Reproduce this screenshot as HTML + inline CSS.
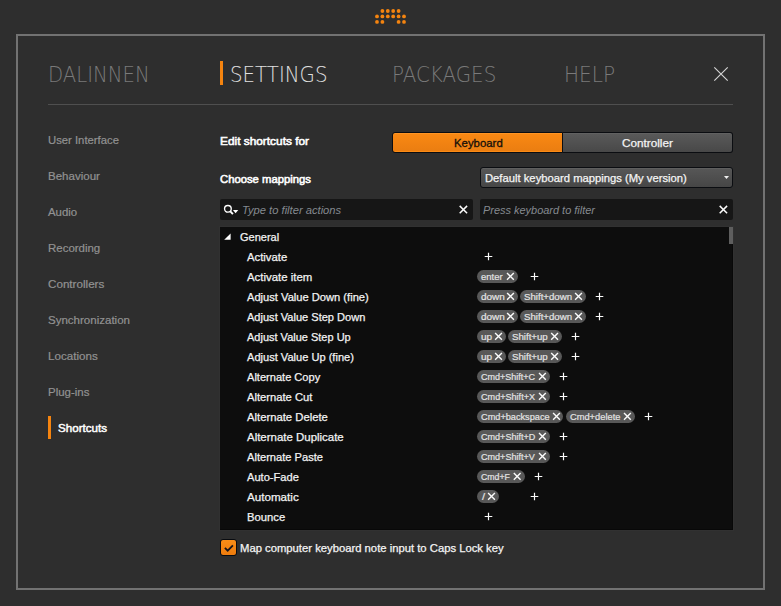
<!DOCTYPE html>
<html lang="en"><head><meta charset="utf-8"><title>Settings - Shortcuts</title>
<style>
html,body{margin:0;padding:0}
body{width:781px;height:606px;background:#2e2e2e;position:relative;overflow:hidden;font-family:"Liberation Sans",sans-serif}
.abs,.t{position:absolute}
.t{white-space:nowrap;transform-origin:0 50%;display:block}
.dialog{left:16px;top:34px;width:745px;height:552px;border:2px solid #727272}
.sep{left:48px;top:104px;width:685px;height:1px;background:#4f4f4f}
.bar{background:#f5840f}
.seg{top:132px;height:19px;border:1px solid #0b0d11;box-sizing:content-box}
.seg.on{left:392px;width:169px;border-radius:3px 0 0 3px;background:linear-gradient(#fa8913,#ea7d11);box-shadow:inset 0 1px 0 #ff9524,inset 0 -1px 0 #fb8a14}
.seg.off{left:562px;width:170px;border-radius:0 3px 3px 0;border-left:none;background:linear-gradient(#5a5a5a,#484848);left:563px;width:169px;box-shadow:inset 0 1px 0 #616161}
.drop{left:480px;top:167px;width:251px;height:19px;border:1px solid #0b0d11;border-radius:3px;background:linear-gradient(#575757,#464646);box-shadow:inset 0 1px 0 #5f5f5f}
.inp{top:199px;height:21px;background:#161616;border-radius:2px}
.list{left:220px;top:227px;width:513px;height:303px;background:#0d0d0d;box-shadow:inset -1px -1px 0 #080808,0 0 0 1px #313131}
.sb{left:729px;top:227px;width:4px;height:17px;background:#5e5e5e}
.chip{}
.pill{position:absolute;height:13px;border-radius:6.5px;background:#585858}
svg{position:absolute;overflow:visible}
.cb{left:220px;top:539px;width:15px;height:15px;border:1px solid #080b10;border-radius:3px;background:linear-gradient(#f98d17,#ee7c0d)}

</style></head><body>
<svg class="logo" style="left:0;top:0" width="781" height="34" viewBox="0 0 781 34" fill="#f5840f"><circle cx="382.4" cy="11.0" r="1.9"/><circle cx="387.8" cy="11.0" r="1.9"/><circle cx="393.2" cy="11.0" r="1.9"/><circle cx="398.6" cy="11.0" r="1.9"/><circle cx="377.0" cy="16.4" r="1.9"/><circle cx="382.4" cy="16.4" r="1.9"/><circle cx="387.8" cy="16.4" r="1.9"/><circle cx="393.2" cy="16.4" r="1.9"/><circle cx="398.6" cy="16.4" r="1.9"/><circle cx="404.0" cy="16.4" r="1.9"/><circle cx="377.0" cy="21.9" r="1.9"/><circle cx="382.4" cy="21.9" r="1.9"/><circle cx="398.6" cy="21.9" r="1.9"/><circle cx="404.0" cy="21.9" r="1.9"/></svg>
<div class="abs dialog"></div>
<nav class="tabs">
<div class="abs bar" style="left:220px;top:61px;width:3px;height:24px"></div>
<span class="t tab" style="left:48.06px;top:61.00px;font-size:22px;line-height:28px;color:#7a7a7a;transform:scaleX(0.8956);font-weight:200;font-family:'DejaVu Sans Light', 'DejaVu Sans', 'Liberation Sans', sans-serif">DALINNEN</span>
<span class="t tab" style="left:230.00px;top:61.00px;font-size:22px;line-height:28px;color:#e0e0e0;transform:scaleX(0.9005);font-weight:200;font-family:'DejaVu Sans Light', 'DejaVu Sans', 'Liberation Sans', sans-serif">SETTINGS</span>
<span class="t tab" style="left:391.84px;top:61.00px;font-size:22px;line-height:28px;color:#7a7a7a;transform:scaleX(0.9025);font-weight:200;font-family:'DejaVu Sans Light', 'DejaVu Sans', 'Liberation Sans', sans-serif">PACKAGES</span>
<span class="t tab" style="left:563.82px;top:61.00px;font-size:22px;line-height:28px;color:#7a7a7a;transform:scaleX(0.9129);font-weight:200;font-family:'DejaVu Sans Light', 'DejaVu Sans', 'Liberation Sans', sans-serif">HELP</span>
<svg style="left:714px;top:67px" width="14" height="14" viewBox="0 0 14 14"><path d="M0.3 0.3L13.7 13.7M13.7 0.3L0.3 13.7" stroke="#d4d4d4" stroke-width="1.15" fill="none"/></svg>
</nav>
<div class="abs sep"></div>
<aside class="side">
<span class="t nav" style="left:47.53px;top:132.00px;font-size:11px;line-height:17px;color:#929292;transform:scaleX(1.0265);-webkit-text-stroke:0.2px #929292">User Interface</span>
<span class="t nav" style="left:47.51px;top:168.00px;font-size:11px;line-height:17px;color:#929292;transform:scaleX(1.0482);-webkit-text-stroke:0.2px #929292">Behaviour</span>
<span class="t nav" style="left:47.90px;top:204.00px;font-size:11px;line-height:17px;color:#929292;transform:scaleX(1.0342);-webkit-text-stroke:0.2px #929292">Audio</span>
<span class="t nav" style="left:47.52px;top:240.00px;font-size:11px;line-height:17px;color:#929292;transform:scaleX(1.0421);-webkit-text-stroke:0.2px #929292">Recording</span>
<span class="t nav" style="left:47.87px;top:276.00px;font-size:11px;line-height:17px;color:#929292;transform:scaleX(1.0590);-webkit-text-stroke:0.2px #929292">Controllers</span>
<span class="t nav" style="left:48.14px;top:312.00px;font-size:11px;line-height:17px;color:#929292;transform:scaleX(1.0477);-webkit-text-stroke:0.2px #929292">Synchronization</span>
<span class="t nav" style="left:47.61px;top:348.00px;font-size:11px;line-height:17px;color:#929292;transform:scaleX(1.0551);-webkit-text-stroke:0.2px #929292">Locations</span>
<span class="t nav" style="left:47.62px;top:384.00px;font-size:11px;line-height:17px;color:#929292;transform:scaleX(1.0426);-webkit-text-stroke:0.2px #929292">Plug-ins</span>
<span class="t nav" style="left:57.94px;top:420.00px;font-size:11px;line-height:17px;color:#ffffff;transform:scaleX(1.0543);-webkit-text-stroke:0.45px #ffffff">Shortcuts</span>
<div class="abs bar" style="left:48px;top:416px;width:3px;height:23px"></div>
</aside>
<main>
<div class="abs seg on"></div><div class="abs seg off"></div>
<div class="abs drop"></div>
<svg style="left:724px;top:176px" width="5" height="3" viewBox="0 0 5 3"><path d="M0 0H5L2.5 3Z" fill="#f0f0f0"/></svg>
<div class="abs inp" style="left:220px;width:253px"></div>
<div class="abs inp" style="left:480px;width:253px"></div>
<svg style="left:223px;top:204px" width="16" height="12" viewBox="0 0 16 12"><circle cx="4.9" cy="4.8" r="3.35" stroke="#ffffff" stroke-width="1.35" fill="none"/><path d="M7.3 7.3L9.9 10.1" stroke="#ffffff" stroke-width="1.9" stroke-linecap="butt"/><path d="M9.9 6H15.3L12.6 9.3Z" fill="#ffffff"/></svg>
<svg style="left:459px;top:205px" width="10" height="10" viewBox="0 0 10 10"><g transform="translate(0.20 0.40)"><path d="M0.5 0.5L7.9 7.9M7.9 0.5L0.5 7.9" stroke="#fafafa" stroke-width="1.5" fill="none"/></g></svg>
<svg style="left:719px;top:205px" width="10" height="10" viewBox="0 0 10 10"><g transform="translate(0.20 0.40)"><path d="M0.5 0.5L7.9 7.9M7.9 0.5L0.5 7.9" stroke="#fafafa" stroke-width="1.5" fill="none"/></g></svg>
<span class="t lbl" style="left:219.96px;top:133.00px;font-size:11px;line-height:17px;color:#ffffff;transform:scaleX(1.0784);-webkit-text-stroke:0.55px #ffffff">Edit shortcuts for</span>
<span class="t lbl" style="left:220.24px;top:171.00px;font-size:11px;line-height:17px;color:#ffffff;transform:scaleX(1.0260);-webkit-text-stroke:0.55px #ffffff">Choose mappings</span>
<span class="t btn" style="left:453.82px;top:135.00px;font-size:11px;line-height:17px;color:#15100a;transform:scaleX(1.0348);-webkit-text-stroke:0.3px #15100a">Keyboard</span>
<span class="t btn" style="left:621.93px;top:135.00px;font-size:11px;line-height:17px;color:#f4f4f4;transform:scaleX(1.0674);-webkit-text-stroke:0.25px #f4f4f4">Controller</span>
<span class="t btn" style="left:484.83px;top:170.00px;font-size:11px;line-height:17px;color:#f4f4f4;transform:scaleX(1.0222);-webkit-text-stroke:0.25px #f4f4f4">Default keyboard mappings (My version)</span>
<span class="t ph" style="left:242.38px;top:202.00px;font-size:11px;line-height:17px;color:#858a90;transform:scaleX(1.0155);font-style:italic">Type to filter actions</span>
<span class="t ph" style="left:483.15px;top:202.00px;font-size:11px;line-height:17px;color:#858a90;transform:scaleX(0.9951);font-style:italic">Press keyboard to filter</span>
<section class="abs list"></section>
<div class="abs sb"></div>
<svg style="left:224px;top:233px" width="7" height="7" viewBox="0 0 7 7"><path d="M6.6 0.4V6.8H0.2Z" fill="#ffffff"/></svg>
<span class="t row" style="left:240.05px;top:229.00px;font-size:11px;line-height:17px;color:#f2f2f2;transform:scaleX(1.0000);-webkit-text-stroke:0.25px #f2f2f2">General</span>
<span class="t row" style="left:247.46px;top:249.00px;font-size:11px;line-height:17px;color:#f2f2f2;transform:scaleX(1.0282);-webkit-text-stroke:0.25px #f2f2f2">Activate</span>
<span class="t row" style="left:247.46px;top:269.00px;font-size:11px;line-height:17px;color:#f2f2f2;transform:scaleX(1.0359);-webkit-text-stroke:0.25px #f2f2f2">Activate item</span>
<span class="t row" style="left:247.45px;top:289.00px;font-size:11px;line-height:17px;color:#f2f2f2;transform:scaleX(1.0125);-webkit-text-stroke:0.25px #f2f2f2">Adjust Value Down (fine)</span>
<span class="t row" style="left:247.45px;top:309.00px;font-size:11px;line-height:17px;color:#f2f2f2;transform:scaleX(1.0043);-webkit-text-stroke:0.25px #f2f2f2">Adjust Value Step Down</span>
<span class="t row" style="left:247.45px;top:329.00px;font-size:11px;line-height:17px;color:#f2f2f2;transform:scaleX(0.9995);-webkit-text-stroke:0.25px #f2f2f2">Adjust Value Step Up</span>
<span class="t row" style="left:247.45px;top:349.00px;font-size:11px;line-height:17px;color:#f2f2f2;transform:scaleX(1.0066);-webkit-text-stroke:0.25px #f2f2f2">Adjust Value Up (fine)</span>
<span class="t row" style="left:247.45px;top:369.00px;font-size:11px;line-height:17px;color:#f2f2f2;transform:scaleX(1.0061);-webkit-text-stroke:0.25px #f2f2f2">Alternate Copy</span>
<span class="t row" style="left:247.45px;top:389.00px;font-size:11px;line-height:17px;color:#f2f2f2;transform:scaleX(1.0186);-webkit-text-stroke:0.25px #f2f2f2">Alternate Cut</span>
<span class="t row" style="left:247.46px;top:409.00px;font-size:11px;line-height:17px;color:#f2f2f2;transform:scaleX(1.0248);-webkit-text-stroke:0.25px #f2f2f2">Alternate Delete</span>
<span class="t row" style="left:247.46px;top:429.00px;font-size:11px;line-height:17px;color:#f2f2f2;transform:scaleX(1.0409);-webkit-text-stroke:0.25px #f2f2f2">Alternate Duplicate</span>
<span class="t row" style="left:247.45px;top:449.00px;font-size:11px;line-height:17px;color:#f2f2f2;transform:scaleX(1.0100);-webkit-text-stroke:0.25px #f2f2f2">Alternate Paste</span>
<span class="t row" style="left:247.45px;top:469.00px;font-size:11px;line-height:17px;color:#f2f2f2;transform:scaleX(1.0107);-webkit-text-stroke:0.25px #f2f2f2">Auto-Fade</span>
<span class="t row" style="left:247.46px;top:489.00px;font-size:11px;line-height:17px;color:#f2f2f2;transform:scaleX(1.0571);-webkit-text-stroke:0.25px #f2f2f2">Automatic</span>
<span class="t row" style="left:246.93px;top:509.00px;font-size:11px;line-height:17px;color:#f2f2f2;transform:scaleX(1.0234);-webkit-text-stroke:0.25px #f2f2f2">Bounce</span>
<div class="pill" style="left:477px;top:270px;width:41.0px"></div>
<svg style="left:506px;top:272px" width="10" height="10" viewBox="0 0 10 10"><g transform="translate(0.60 0.50)"><path d="M0.4 0.4L7.2 7.2M7.2 0.4L0.4 7.2" stroke="#fafafa" stroke-width="1.4" fill="none"/></g></svg>
<div class="pill" style="left:477px;top:290px;width:40.8px"></div>
<svg style="left:506px;top:292px" width="10" height="10" viewBox="0 0 10 10"><g transform="translate(0.70 0.50)"><path d="M0.4 0.4L7.2 7.2M7.2 0.4L0.4 7.2" stroke="#fafafa" stroke-width="1.4" fill="none"/></g></svg>
<div class="pill" style="left:520.2px;top:290px;width:65.8px"></div>
<svg style="left:574px;top:292px" width="10" height="10" viewBox="0 0 10 10"><g transform="translate(0.70 0.50)"><path d="M0.4 0.4L7.2 7.2M7.2 0.4L0.4 7.2" stroke="#fafafa" stroke-width="1.4" fill="none"/></g></svg>
<div class="pill" style="left:477px;top:310px;width:40.8px"></div>
<svg style="left:506px;top:312px" width="10" height="10" viewBox="0 0 10 10"><g transform="translate(0.70 0.50)"><path d="M0.4 0.4L7.2 7.2M7.2 0.4L0.4 7.2" stroke="#fafafa" stroke-width="1.4" fill="none"/></g></svg>
<div class="pill" style="left:520.2px;top:310px;width:65.8px"></div>
<svg style="left:574px;top:312px" width="10" height="10" viewBox="0 0 10 10"><g transform="translate(0.70 0.50)"><path d="M0.4 0.4L7.2 7.2M7.2 0.4L0.4 7.2" stroke="#fafafa" stroke-width="1.4" fill="none"/></g></svg>
<div class="pill" style="left:477px;top:330px;width:28.8px"></div>
<svg style="left:494px;top:332px" width="10" height="10" viewBox="0 0 10 10"><g transform="translate(0.70 0.50)"><path d="M0.4 0.4L7.2 7.2M7.2 0.4L0.4 7.2" stroke="#fafafa" stroke-width="1.4" fill="none"/></g></svg>
<div class="pill" style="left:508.1px;top:330px;width:53.7px"></div>
<svg style="left:550px;top:332px" width="10" height="10" viewBox="0 0 10 10"><g transform="translate(0.80 0.50)"><path d="M0.4 0.4L7.2 7.2M7.2 0.4L0.4 7.2" stroke="#fafafa" stroke-width="1.4" fill="none"/></g></svg>
<div class="pill" style="left:477px;top:350px;width:28.8px"></div>
<svg style="left:494px;top:352px" width="10" height="10" viewBox="0 0 10 10"><g transform="translate(0.70 0.50)"><path d="M0.4 0.4L7.2 7.2M7.2 0.4L0.4 7.2" stroke="#fafafa" stroke-width="1.4" fill="none"/></g></svg>
<div class="pill" style="left:508.1px;top:350px;width:53.7px"></div>
<svg style="left:550px;top:352px" width="10" height="10" viewBox="0 0 10 10"><g transform="translate(0.80 0.50)"><path d="M0.4 0.4L7.2 7.2M7.2 0.4L0.4 7.2" stroke="#fafafa" stroke-width="1.4" fill="none"/></g></svg>
<div class="pill" style="left:477px;top:370px;width:72.8px"></div>
<svg style="left:538px;top:372px" width="10" height="10" viewBox="0 0 10 10"><g transform="translate(0.60 0.50)"><path d="M0.4 0.4L7.2 7.2M7.2 0.4L0.4 7.2" stroke="#fafafa" stroke-width="1.4" fill="none"/></g></svg>
<div class="pill" style="left:477px;top:390px;width:72.8px"></div>
<svg style="left:538px;top:392px" width="10" height="10" viewBox="0 0 10 10"><g transform="translate(0.60 0.50)"><path d="M0.4 0.4L7.2 7.2M7.2 0.4L0.4 7.2" stroke="#fafafa" stroke-width="1.4" fill="none"/></g></svg>
<div class="pill" style="left:477px;top:410px;width:86.4px"></div>
<svg style="left:552px;top:412px" width="10" height="10" viewBox="0 0 10 10"><g transform="translate(0.70 0.50)"><path d="M0.4 0.4L7.2 7.2M7.2 0.4L0.4 7.2" stroke="#fafafa" stroke-width="1.4" fill="none"/></g></svg>
<div class="pill" style="left:566px;top:410px;width:69.1px"></div>
<svg style="left:623px;top:412px" width="10" height="10" viewBox="0 0 10 10"><g transform="translate(0.60 0.50)"><path d="M0.4 0.4L7.2 7.2M7.2 0.4L0.4 7.2" stroke="#fafafa" stroke-width="1.4" fill="none"/></g></svg>
<div class="pill" style="left:477px;top:430px;width:72.8px"></div>
<svg style="left:538px;top:432px" width="10" height="10" viewBox="0 0 10 10"><g transform="translate(0.60 0.50)"><path d="M0.4 0.4L7.2 7.2M7.2 0.4L0.4 7.2" stroke="#fafafa" stroke-width="1.4" fill="none"/></g></svg>
<div class="pill" style="left:477px;top:450px;width:72.8px"></div>
<svg style="left:538px;top:452px" width="10" height="10" viewBox="0 0 10 10"><g transform="translate(0.60 0.50)"><path d="M0.4 0.4L7.2 7.2M7.2 0.4L0.4 7.2" stroke="#fafafa" stroke-width="1.4" fill="none"/></g></svg>
<div class="pill" style="left:477px;top:470px;width:47.5px"></div>
<svg style="left:513px;top:472px" width="10" height="10" viewBox="0 0 10 10"><g transform="translate(0.40 0.50)"><path d="M0.4 0.4L7.2 7.2M7.2 0.4L0.4 7.2" stroke="#fafafa" stroke-width="1.4" fill="none"/></g></svg>
<div class="pill" style="left:477px;top:490px;width:21.9px"></div>
<svg style="left:487px;top:492px" width="10" height="10" viewBox="0 0 10 10"><g transform="translate(0.70 0.50)"><path d="M0.4 0.4L7.2 7.2M7.2 0.4L0.4 7.2" stroke="#fafafa" stroke-width="1.4" fill="none"/></g></svg>
<span class="t chip" style="left:480.95px;top:269.00px;font-size:9.5px;line-height:15.5px;color:#e4e4e4;transform:scaleX(1.0000);-webkit-text-stroke:0.2px #e4e4e4">enter</span>
<span class="t chip" style="left:481.04px;top:289.00px;font-size:9.5px;line-height:15.5px;color:#e4e4e4;transform:scaleX(1.0455);-webkit-text-stroke:0.2px #e4e4e4">down</span>
<span class="t chip" style="left:524.05px;top:289.00px;font-size:9.5px;line-height:15.5px;color:#e4e4e4;transform:scaleX(1.0160);-webkit-text-stroke:0.2px #e4e4e4">Shift+down</span>
<span class="t chip" style="left:481.04px;top:309.00px;font-size:9.5px;line-height:15.5px;color:#e4e4e4;transform:scaleX(1.0455);-webkit-text-stroke:0.2px #e4e4e4">down</span>
<span class="t chip" style="left:524.05px;top:309.00px;font-size:9.5px;line-height:15.5px;color:#e4e4e4;transform:scaleX(1.0160);-webkit-text-stroke:0.2px #e4e4e4">Shift+down</span>
<span class="t chip" style="left:480.98px;top:329.00px;font-size:9.5px;line-height:15.5px;color:#e4e4e4;transform:scaleX(1.0500);-webkit-text-stroke:0.2px #e4e4e4">up</span>
<span class="t chip" style="left:512.05px;top:329.00px;font-size:9.5px;line-height:15.5px;color:#e4e4e4;transform:scaleX(1.0158);-webkit-text-stroke:0.2px #e4e4e4">Shift+up</span>
<span class="t chip" style="left:480.98px;top:349.00px;font-size:9.5px;line-height:15.5px;color:#e4e4e4;transform:scaleX(1.0500);-webkit-text-stroke:0.2px #e4e4e4">up</span>
<span class="t chip" style="left:512.05px;top:349.00px;font-size:9.5px;line-height:15.5px;color:#e4e4e4;transform:scaleX(1.0158);-webkit-text-stroke:0.2px #e4e4e4">Shift+up</span>
<span class="t chip" style="left:481.26px;top:369.00px;font-size:9.5px;line-height:15.5px;color:#e4e4e4;transform:scaleX(0.9480);-webkit-text-stroke:0.2px #e4e4e4">Cmd+Shift+C</span>
<span class="t chip" style="left:481.26px;top:389.00px;font-size:9.5px;line-height:15.5px;color:#e4e4e4;transform:scaleX(0.9564);-webkit-text-stroke:0.2px #e4e4e4">Cmd+Shift+X</span>
<span class="t chip" style="left:481.26px;top:409.00px;font-size:9.5px;line-height:15.5px;color:#e4e4e4;transform:scaleX(0.9660);-webkit-text-stroke:0.2px #e4e4e4">Cmd+backspace</span>
<span class="t chip" style="left:570.36px;top:409.00px;font-size:9.5px;line-height:15.5px;color:#e4e4e4;transform:scaleX(0.9784);-webkit-text-stroke:0.2px #e4e4e4">Cmd+delete</span>
<span class="t chip" style="left:481.26px;top:429.00px;font-size:9.5px;line-height:15.5px;color:#e4e4e4;transform:scaleX(0.9522);-webkit-text-stroke:0.2px #e4e4e4">Cmd+Shift+D</span>
<span class="t chip" style="left:481.26px;top:449.00px;font-size:9.5px;line-height:15.5px;color:#e4e4e4;transform:scaleX(0.9522);-webkit-text-stroke:0.2px #e4e4e4">Cmd+Shift+V</span>
<span class="t chip" style="left:481.27px;top:469.00px;font-size:9.5px;line-height:15.5px;color:#e4e4e4;transform:scaleX(0.9194);-webkit-text-stroke:0.2px #e4e4e4">Cmd+F</span>
<span class="t chip" style="left:481.79px;top:489.00px;font-size:9.5px;line-height:15.5px;color:#e4e4e4;transform:scaleX(1.1667);-webkit-text-stroke:0.2px #e4e4e4">/</span>
<svg style="left:484px;top:252px" width="10" height="10" viewBox="0 0 10 10"><g transform="translate(0.70 0.70)"><path d="M3.8 0V7.6M0 3.8H7.6" stroke="#fafafa" stroke-width="1.2" fill="none"/></g></svg>
<svg style="left:530px;top:272px" width="10" height="10" viewBox="0 0 10 10"><g transform="translate(0.70 0.70)"><path d="M3.8 0V7.6M0 3.8H7.6" stroke="#fafafa" stroke-width="1.2" fill="none"/></g></svg>
<svg style="left:595px;top:292px" width="10" height="10" viewBox="0 0 10 10"><g transform="translate(0.70 0.70)"><path d="M3.8 0V7.6M0 3.8H7.6" stroke="#fafafa" stroke-width="1.2" fill="none"/></g></svg>
<svg style="left:595px;top:312px" width="10" height="10" viewBox="0 0 10 10"><g transform="translate(0.70 0.70)"><path d="M3.8 0V7.6M0 3.8H7.6" stroke="#fafafa" stroke-width="1.2" fill="none"/></g></svg>
<svg style="left:571px;top:332px" width="10" height="10" viewBox="0 0 10 10"><g transform="translate(0.70 0.70)"><path d="M3.8 0V7.6M0 3.8H7.6" stroke="#fafafa" stroke-width="1.2" fill="none"/></g></svg>
<svg style="left:571px;top:352px" width="10" height="10" viewBox="0 0 10 10"><g transform="translate(0.70 0.70)"><path d="M3.8 0V7.6M0 3.8H7.6" stroke="#fafafa" stroke-width="1.2" fill="none"/></g></svg>
<svg style="left:559px;top:372px" width="10" height="10" viewBox="0 0 10 10"><g transform="translate(0.70 0.70)"><path d="M3.8 0V7.6M0 3.8H7.6" stroke="#fafafa" stroke-width="1.2" fill="none"/></g></svg>
<svg style="left:559px;top:392px" width="10" height="10" viewBox="0 0 10 10"><g transform="translate(0.70 0.70)"><path d="M3.8 0V7.6M0 3.8H7.6" stroke="#fafafa" stroke-width="1.2" fill="none"/></g></svg>
<svg style="left:644px;top:412px" width="10" height="10" viewBox="0 0 10 10"><g transform="translate(0.70 0.70)"><path d="M3.8 0V7.6M0 3.8H7.6" stroke="#fafafa" stroke-width="1.2" fill="none"/></g></svg>
<svg style="left:559px;top:432px" width="10" height="10" viewBox="0 0 10 10"><g transform="translate(0.70 0.70)"><path d="M3.8 0V7.6M0 3.8H7.6" stroke="#fafafa" stroke-width="1.2" fill="none"/></g></svg>
<svg style="left:559px;top:452px" width="10" height="10" viewBox="0 0 10 10"><g transform="translate(0.70 0.70)"><path d="M3.8 0V7.6M0 3.8H7.6" stroke="#fafafa" stroke-width="1.2" fill="none"/></g></svg>
<svg style="left:534px;top:472px" width="10" height="10" viewBox="0 0 10 10"><g transform="translate(0.70 0.70)"><path d="M3.8 0V7.6M0 3.8H7.6" stroke="#fafafa" stroke-width="1.2" fill="none"/></g></svg>
<svg style="left:530px;top:492px" width="10" height="10" viewBox="0 0 10 10"><g transform="translate(0.70 0.70)"><path d="M3.8 0V7.6M0 3.8H7.6" stroke="#fafafa" stroke-width="1.2" fill="none"/></g></svg>
<svg style="left:484px;top:512px" width="10" height="10" viewBox="0 0 10 10"><g transform="translate(0.70 0.70)"><path d="M3.8 0V7.6M0 3.8H7.6" stroke="#fafafa" stroke-width="1.2" fill="none"/></g></svg>
<div class="abs cb"></div>
<svg style="left:220px;top:539px" width="17" height="17" viewBox="0 0 17 17"><path d="M4.9 8.8L7.7 11.7L12.9 6.4" stroke="#15141c" stroke-width="1.8" fill="none"/></svg>
<span class="t lbl" style="left:239.93px;top:540.00px;font-size:11px;line-height:17px;color:#f4f4f4;transform:scaleX(1.0241);-webkit-text-stroke:0.25px #f4f4f4">Map computer keyboard note input to Caps Lock key</span>
</main>
</body></html>
